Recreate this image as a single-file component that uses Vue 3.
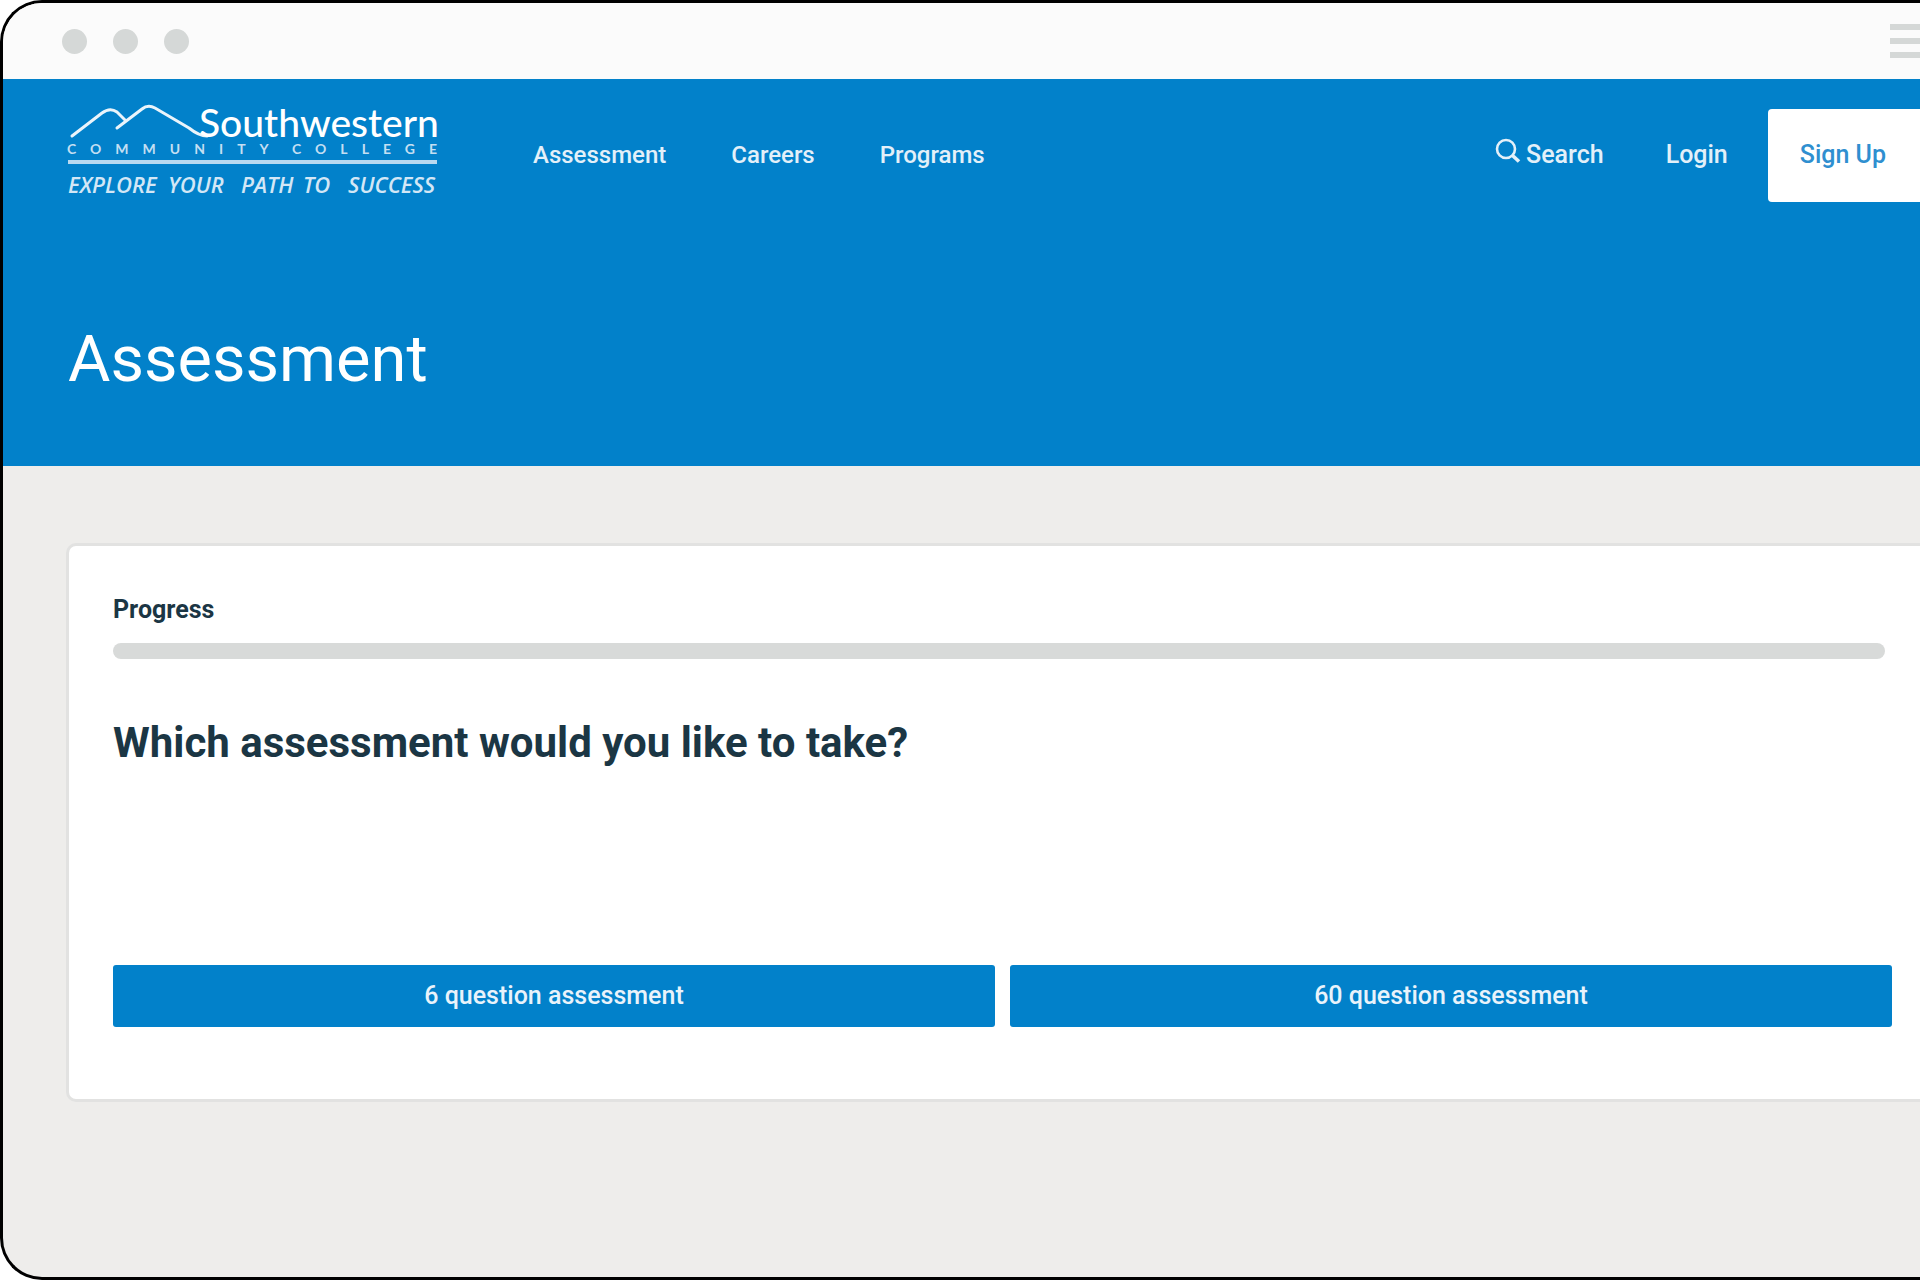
<script setup>
import { ref } from 'vue'

const links = ['Assessment', 'Careers', 'Programs']
const choices = ['6 question assessment', '60 question assessment']
const progress = ref(0)
</script>

<template>
  <div class="window">
    <div class="titlebar">
      <div class="dots"><i></i><i></i><i></i></div>
      <button class="menu" type="button" aria-label="Menu"><i></i><i></i><i></i></button>
    </div>

    <header class="hero">
      <div class="navbar">
        <a class="logo" href="#" aria-label="Southwestern Community College">
          <svg width="376" height="100" viewBox="0 0 376 100">
            <g fill="none" stroke="#eaf4fb" stroke-linecap="round" stroke-linejoin="round">
              <path d="M7 31 L37 8 Q45 2 52 7 L60 15" stroke-width="3" />
              <path d="M52 23 L77 4 Q83 -1 90 3 L124 23 Q134 31 142 31" stroke-width="3" />
            </g>
            <text class="name" x="134" y="32">Southwestern</text>
            <text class="college" x="2" y="49">COMMUNITY</text>
            <text class="college" x="227" y="49">COLLEGE</text>
            <rect x="3" y="55" width="369" height="4" fill="#b9d9f0" />
            <text class="motto" x="3" y="88">EXPLORE</text>
            <text class="motto" x="103" y="88">YOUR</text>
            <text class="motto" x="176" y="88">PATH</text>
            <text class="motto" x="238" y="88">TO</text>
            <text class="motto" x="283" y="88">SUCCESS</text>
          </svg>
        </a>
        <nav class="links">
          <a v-for="link in links" :key="link" href="#">{{ link }}</a>
        </nav>
        <div class="account">
          <a class="search" href="#">
            <svg width="26" height="26" viewBox="0 0 26 26" fill="none" stroke="#e3f0f9">
              <circle cx="11" cy="11" r="9" stroke-width="2.6" />
              <path d="M17.500 17.500 L24 23.500" stroke-width="3.600" />
            </svg>
            <span>Search</span>
          </a>
          <a href="#">Login</a>
          <button class="signup" type="button">Sign Up</button>
        </div>
      </div>
      <h1>Assessment</h1>
    </header>

    <main>
      <section class="card">
        <label class="label" for="progress">Progress</label>
        <progress id="progress" :value="progress" max="100"></progress>
        <h2>Which assessment would you like to take?</h2>
        <div class="choices">
          <button v-for="choice in choices" :key="choice" type="button">{{ choice }}</button>
        </div>
      </section>
    </main>
  </div>
</template>

<style>
body {
  margin: 0;
  background: #fff;
}
</style>

<style scoped>
* {
  box-sizing: border-box;
}

.window {
  display: flex;
  flex-direction: column;
  min-height: 100vh;
  overflow: hidden;
  border: 3px solid #000;
  border-right: none;
  border-radius: 42px 0 0 42px;
  background: #eeedeb;
  font-family: Roboto, "Liberation Sans", sans-serif;
  font-size: 25px;
  line-height: 28px;
  color: #1b3644;
}

a {
  color: inherit;
  text-decoration: none;
}

button {
  border: none;
  font: inherit;
  cursor: pointer;
}

.titlebar {
  display: flex;
  justify-content: space-between;
  align-items: center;
  height: 76px;
  padding-left: 59px;
  background: #fbfbfb;
}

.dots {
  display: flex;
  gap: 26px;
}

.dots i {
  width: 25px;
  height: 25px;
  border-radius: 50%;
  background: #d5d8d7;
}

.menu {
  display: flex;
  flex-direction: column;
  gap: 8px;
  width: 30px;
  padding: 0;
  background: none;
}

.menu i {
  height: 6px;
  background: #d5d8d7;
}

.hero {
  padding: 24px 0 69px 62px;
  background: #0281ca;
  color: #fff;
}

.navbar {
  display: flex;
  align-items: center;
  height: 104px;
  font-weight: 500;
  color: #e3f0f9;
}

.logo svg {
  display: block;
  overflow: visible;
}

.name {
  fill: #fff;
  font: 500 39px Lato, sans-serif;
}

.college {
  fill: #c4dff2;
  font: 700 14px Lato, sans-serif;
  letter-spacing: 14px;
}

.motto {
  fill: #d3e7f6;
  font: italic 600 22px "Open Sans", sans-serif;
}

.links {
  display: flex;
  gap: 65px;
  margin-left: 92px;
  font-size: 24px;
}

.account {
  display: flex;
  align-items: center;
  margin-left: auto;
}

.search {
  display: flex;
  align-items: center;
  gap: 5px;
  margin-right: 62px;
}

.search svg {
  margin-bottom: 8px;
}

.signup {
  height: 93px;
  margin-left: 40px;
  padding: 0 34px 0 32px;
  border-radius: 4px 0 0 4px;
  background: #fff;
  color: #2f8fd0;
}

h1 {
  margin: 114px 0 0 3px;
  font-size: 65px;
  font-weight: 400;
  line-height: 76px;
}

main {
  padding: 77px 0 77px 63px;
}

.card {
  padding: 50px 28px 72px 44px;
  border: 3px solid #e2e2e1;
  border-right: none;
  border-radius: 10px 0 0 10px;
  background: #fff;
}

.label {
  display: block;
  font-weight: 700;
}

progress {
  display: block;
  width: calc(100% - 7px);
  height: 16px;
  margin-top: 19px;
  overflow: hidden;
  border: none;
  border-radius: 8px;
  background: #d8dad9;
  appearance: none;
}

progress::-webkit-progress-bar {
  background: #d8dad9;
}

progress::-webkit-progress-value {
  background: #0281ca;
}

h2 {
  margin: 60px 0 0;
  font-size: 42px;
  font-weight: 700;
  line-height: 48px;
}

.choices {
  display: flex;
  gap: 15px;
  margin-top: 198px;
}

.choices button {
  flex: 1;
  height: 62px;
  border-radius: 3px;
  background: #0281ca;
  color: #e9f3fb;
  font-weight: 500;
}
</style>
